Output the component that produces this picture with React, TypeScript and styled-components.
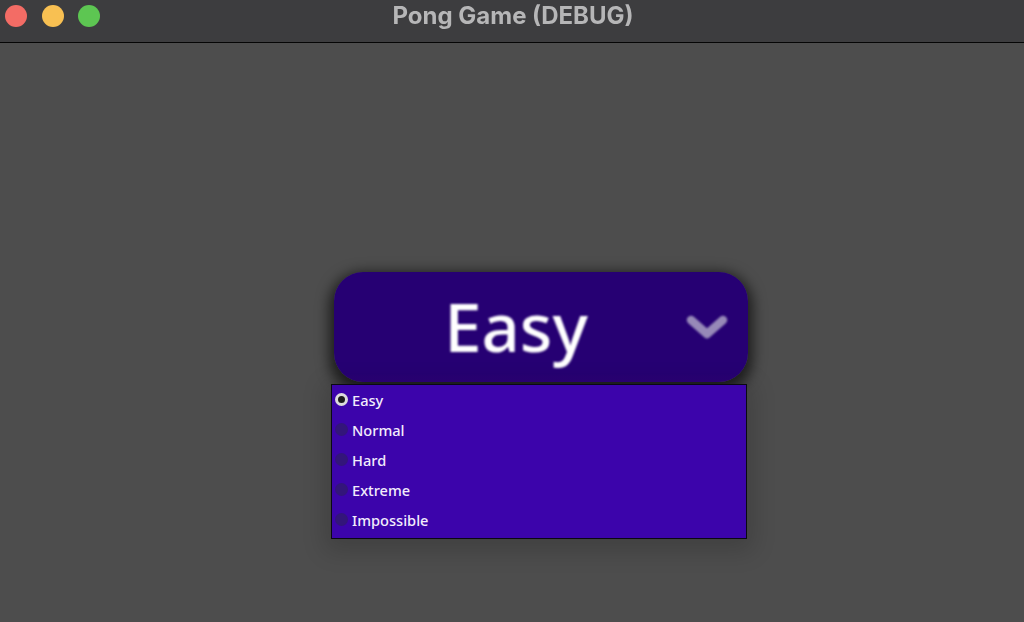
import React from "react";
import styled, { createGlobalStyle } from "styled-components";

const Global = createGlobalStyle`
  html, body { margin: 0; padding: 0; height: 100%; background: #4d4d4d; overflow: hidden; }
  #root { height: 100%; }
`;

const Window = styled.div`
  width: 1024px;
  height: 622px;
  display: flex;
  flex-direction: column;
  background: #4d4d4d;
`;

const TitleBar = styled.header`
  position: relative;
  flex: none;
  height: 42px;
  box-sizing: border-box;
  display: flex;
  align-items: center;
  justify-content: center;
  background: #3d3d3f;
`;

const TitleRule = styled.div`
  flex: none;
  height: 1px;
  background: #050505;
`;

const Lights = styled.div`
  position: absolute;
  left: 5px;
  top: 5px;
  display: flex;
  gap: 14.5px;
`;

const Light = styled.span<{ $color: string }>`
  width: 22px;
  height: 22px;
  border-radius: 50%;
  background: ${(p) => p.$color};
`;

const Title = styled.h1`
  margin: -11px 0 0 2px;
  font: 700 24px/30px Inter, "Liberation Sans", sans-serif;
  color: #b6b6b7;
  filter: blur(0.35px);
`;

const Stage = styled.main`
  flex: 1;
  display: flex;
  flex-direction: column;
  padding: 229px 0 0 331px;
`;

const Select = styled.button`
  width: 414px;
  height: 110px;
  margin-left: 3px;
  padding: 0;
  border: 0;
  border-radius: 29px;
  position: relative;
  display: flex;
  align-items: center;
  justify-content: center;
  background: linear-gradient(#260073 0%, #260073 92%, #2c0077 100%);
  box-shadow: 0 5px 13px 5px rgba(0, 0, 0, 0.62);
`;

const SelectLabel = styled.span`
  margin: -2px 0 0 -50px;
  font: 500 67px/1 "Noto Sans", "Open Sans", sans-serif;
  color: #ffffff;
  filter: blur(0.9px);
`;

const Chevron = styled.svg`
  position: absolute;
  right: 18px;
  top: 41px;
  width: 46px;
  height: 34px;
  filter: blur(1px);
`;

const Popup = styled.ul`
  width: 416px;
  height: 155px;
  box-sizing: border-box;
  margin: 2px 0 0;
  padding: 1px 0 0 1px;
  list-style: none;
  background: #3c04ab;
  border: 1px solid #0a0a12;
  position: relative;
  box-shadow: 0 6px 22px 6px rgba(0, 0, 0, 0.16);
`;

const Option = styled.li`
  height: 30px;
  box-sizing: border-box;
  padding: 0 0 2px 2px;
  display: flex;
  align-items: center;
  gap: 4px;
  font: 500 14.6px/28px "Noto Sans", "Open Sans", sans-serif;
  color: #f2edfb;
`;

const Radio = styled.span<{ $checked?: boolean }>`
  flex: none;
  width: 13px;
  height: 13px;
  box-sizing: border-box;
  margin-top: -1px;
  border-radius: 50%;
  background: ${(p) => (p.$checked ? "#1c1c1c" : "#33157a")};
  border: ${(p) => (p.$checked ? "3px solid #dcdcdc" : "0")};
`;

const options = ["Easy", "Normal", "Hard", "Extreme", "Impossible"];

export default function App() {
  return (
    <Window>
      <Global />
      <TitleBar>
        <Lights>
          <Light $color="#f36c65" />
          <Light $color="#f8c052" />
          <Light $color="#5dc652" />
        </Lights>
        <Title>Pong Game (DEBUG)</Title>
      </TitleBar>
      <TitleRule />
      <Stage>
        <Select>
          <SelectLabel>Easy</SelectLabel>
          <Chevron viewBox="0 0 46 34" fill="none">
            <path d="M7 7 L23 21 L39 7" stroke="#9789b8" strokeWidth="8.5" strokeLinecap="round" strokeLinejoin="round" />
          </Chevron>
        </Select>
        <Popup>
          {options.map((o, i) => (
            <Option key={o}>
              <Radio $checked={i === 0} />
              {o}
            </Option>
          ))}
        </Popup>
      </Stage>
    </Window>
  );
}
